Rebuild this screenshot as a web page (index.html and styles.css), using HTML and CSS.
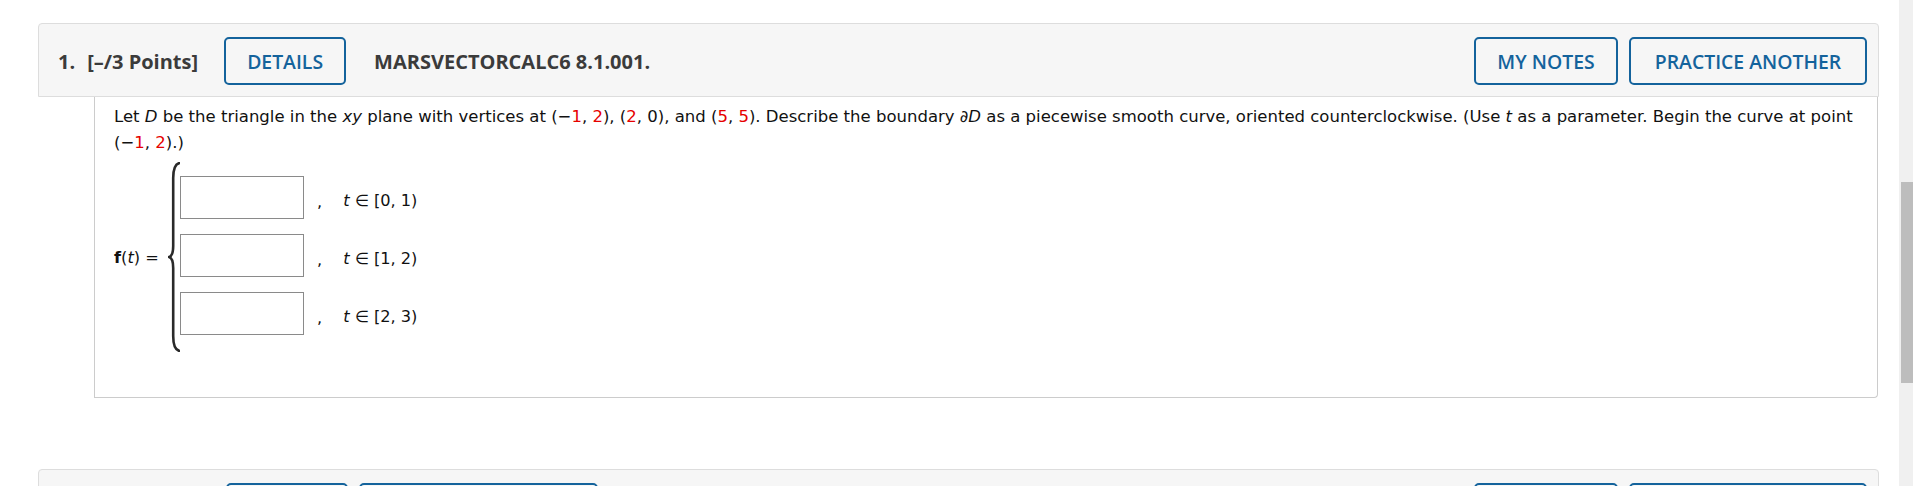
FILE: index.html
```html
<!DOCTYPE html>
<html lang="en">
<head>
<meta charset="utf-8">
<title>Question</title>
<link rel="stylesheet" href="styles.css">
</head>
<body>
<div class="page">
  <section class="question">
    <header class="q-head">
      <div class="q-left">
        <span class="q-num">1.</span>
        <span class="q-pts">[–/3 Points]</span>
        <button class="btn btn-details">DETAILS</button>
        <span class="q-code">MARSVECTORCALC6 8.1.001.</span>
      </div>
      <div class="q-right">
        <button class="btn btn-notes">MY NOTES</button>
        <button class="btn btn-practice">PRACTICE ANOTHER</button>
      </div>
    </header>
    <div class="q-body">
      <div class="q-inner">
        <p class="prompt">Let <i>D</i> be the triangle in the <i>xy</i> plane with vertices at <span class="nw">(−<span class="red">1</span>, <span class="red">2</span>)</span>, <span class="nw">(<span class="red">2</span>, 0)</span>, and <span class="nw">(<span class="red">5</span>, <span class="red">5</span>)</span>. Describe the boundary <i>∂D</i> as a piecewise smooth curve, oriented counterclockwise. (Use <i>t</i> as a parameter. Begin the curve at point <span class="nw">(−<span class="red">1</span>, <span class="red">2</span>).)</span></p>
        <div class="formula">
          <span class="lhs"><b>f</b>(<i>t</i>) =</span>
          <svg class="brace" viewBox="0 0 12 190" width="12" height="190" aria-hidden="true">
            <path d="M11.5 1 C7 2 5.2 6 5.2 16 L5.2 84 C5.2 91 4 94 1.2 95 C4 96 5.2 99 5.2 106 L5.2 174 C5.2 184 7 188 11.5 189" fill="none" stroke="#2a2a2a" stroke-width="2.6" stroke-linecap="round"/>
          </svg>
          <div class="cases">
            <div class="case"><span class="box"></span><span class="comma">,</span><span class="range"><i>t</i> ∈ [0, 1)</span></div>
            <div class="case"><span class="box"></span><span class="comma">,</span><span class="range"><i>t</i> ∈ [1, 2)</span></div>
            <div class="case"><span class="box"></span><span class="comma">,</span><span class="range"><i>t</i> ∈ [2, 3)</span></div>
          </div>
        </div>
      </div>
    </div>
  </section>
  <section class="question">
    <header class="q-head">
      <div class="q-left">
        <span class="q-num">2.</span>
        <span class="q-pts">[0/3 Points]</span>
        <button class="btn btn-details">DETAILS</button>
        <button class="btn btn-prev">PREVIOUS ANSWERS</button>
      </div>
      <div class="q-right">
        <button class="btn btn-notes">MY NOTES</button>
        <button class="btn btn-practice">PRACTICE ANOTHER</button>
      </div>
    </header>
  </section>
</div>
<div class="scrollbar"><div class="thumb"></div></div>
</body>
</html>
```
FILE: styles.css
```css
html, body {
  margin: 0;
  padding: 0;
  background: #fff;
  overflow: hidden;
  height: 486px;
}
.page {
  width: 1899px;
  box-sizing: border-box;
  padding: 23px 20px 0 38px;
}
.question + .question {
  margin-top: 71px;
}
.q-head {
  box-sizing: border-box;
  height: 74px;
  background: #f6f6f6;
  border: 1px solid #dddddd;
  border-radius: 4px 4px 0 0;
  display: flex;
  align-items: center;
  justify-content: space-between;
  padding: 2px 11px 0 19px;
  font-family: "Open Sans", "Noto Sans", sans-serif;
  font-weight: 700;
  font-size: 20px;
  color: #3b3b3b;
}
.q-left, .q-right {
  display: flex;
  align-items: center;
}
.q-num { margin-right: 12px; }
.q-pts { margin-right: 26px; }
.btn {
  box-sizing: border-box;
  height: 48px;
  border: 2px solid #14639c;
  border-radius: 5px;
  background: transparent;
  color: #14639c;
  font-family: "Open Sans", "Noto Sans", sans-serif;
  font-weight: 600;
  font-size: 19.4px;
  padding: 0;
  text-align: center;
  white-space: nowrap;
}
.btn-details { width: 122px; margin-right: 28px; }
.btn-prev { width: 239px; margin-left: -17px; }
.btn-notes { width: 144px; margin-right: 11px; }
.btn-practice { width: 238px; }

.q-body {
  box-sizing: border-box;
  height: 301px;
  margin-left: 56px;
  margin-right: 1px;
  border-left: 1px solid #cccccc;
  border-right: 1px solid #cccccc;
  border-bottom: 1px solid #cccccc;
  border-radius: 0 0 4px 0;
}
.q-inner {
  padding-top: 7px;
  padding-left: 19px;
  padding-right: 12px;
  font-family: "DejaVu Sans", Verdana, sans-serif;
  font-size: 16.5px;
  color: #111;
}
.prompt {
  margin: 0;
  line-height: 26px;
}
.nw { white-space: nowrap; }
.red { color: #e60000; }

.formula {
  display: flex;
  align-items: center;
  margin-top: 6px;
}
.lhs {
  width: 54px;
  flex: none;
  white-space: nowrap;
  font-size: 16.2px;
}
.brace {
  display: block;
  flex: none;
}
.cases {
  display: flex;
  flex-direction: column;
  gap: 15px;
  padding: 1px 0 4px 0;
  font-size: 16.2px;
}
.case {
  display: flex;
  align-items: center;
}
.box {
  box-sizing: border-box;
  width: 124px;
  height: 43px;
  border: 1px solid #8a8a8a;
  background: #fff;
}
.comma {
  margin-left: 13px;
  margin-right: 21px;
  position: relative;
  top: 4px;
}
.range {
  white-space: nowrap;
  position: relative;
  top: 3px;
}

.scrollbar {
  position: fixed;
  top: 0;
  right: 0;
  width: 14px;
  height: 486px;
  background: #f0f0f0;
}
.thumb {
  position: absolute;
  top: 182px;
  left: 2px;
  right: 0;
  height: 201px;
  background: #bdbdbd;
}
```
